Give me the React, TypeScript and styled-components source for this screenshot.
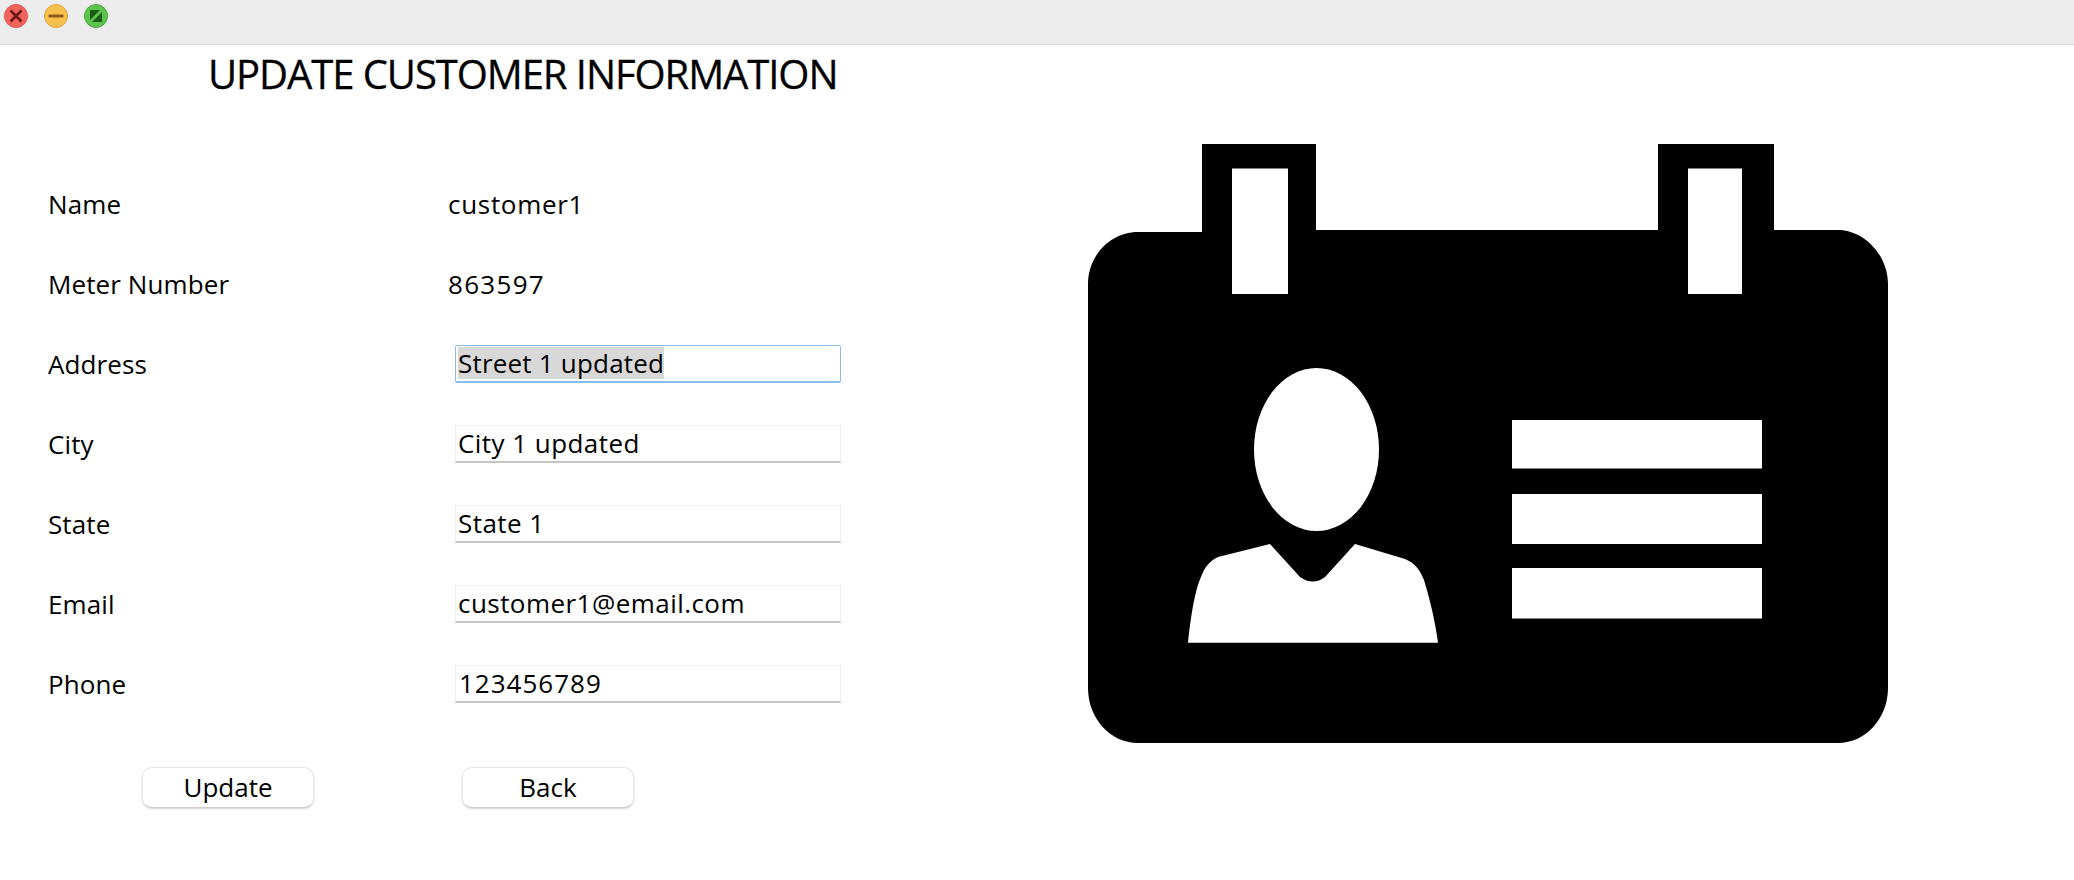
import { createGlobalStyle } from "styled-components";
import styled from "styled-components";

const GlobalStyle = createGlobalStyle`
  html, body {
    margin: 0;
    padding: 0;
    background: #ffffff;
    font-family: "Open Sans", "Liberation Sans", sans-serif;
    color: #000000;
  }
`;

const Page = styled.div`
  width: 2074px;
  height: 880px;
  overflow: hidden;
  background: #ffffff;
`;

const TitleBar = styled.div`
  height: 45px;
  box-sizing: border-box;
  padding: 4px 4px 0;
  display: flex;
  gap: 16px;
  background: #ececed;
  border-bottom: 1px solid #d6d6d6;
`;

const TrafficLight = styled.svg`
  width: 24px;
  height: 24px;
  display: block;
`;

const Content = styled.div`
  display: flex;
  align-items: flex-start;
`;

const FormColumn = styled.div`
  width: 1088px;
  box-sizing: border-box;
  padding-left: 48px;
`;

const Heading = styled.h1`
  margin: 0;
  padding: 4px 0 0 160px;
  height: 119px;
  box-sizing: border-box;
  font-size: 40px;
  line-height: 50px;
  font-weight: 400;
  letter-spacing: -1.07px;
  white-space: nowrap;
  -webkit-text-stroke: 0.3px #000000;
`;

const Row = styled.div`
  display: grid;
  grid-template-columns: 400px 393px;
  align-items: center;
  height: 80px;
  font-size: 26px;
`;

const Label = styled.div`
  line-height: 36px;
  letter-spacing: 0.1px;
`;

const Value = styled.div<{ $spacing: number }>`
  line-height: 36px;
  letter-spacing: ${(p) => p.$spacing}px;
`;

const Field = styled.div<{ $focused?: boolean; $numeric?: boolean }>`
  margin-left: 7px;
  height: 38px;
  box-sizing: border-box;
  padding-left: ${(p) => (p.$numeric ? 3 : 2)}px;
  line-height: 35px;
  letter-spacing: ${(p) => (p.$numeric ? 1 : 0.45)}px;
  background: #ffffff;
  border: 1px solid ${(p) => (p.$focused ? "#8cbcf0" : "#f0f0f0")};
  border-bottom: 2px solid ${(p) => (p.$focused ? "#8cbcf0" : "#c4c4c4")};
  border-radius: ${(p) => (p.$focused ? 2 : 0)}px;
`;

const Selected = styled.span`
  display: inline-block;
  margin-top: 1px;
  line-height: 32px;
  letter-spacing: 0.2px;
  background: #d8d8d8;
`;

const Buttons = styled.div`
  display: flex;
  gap: 148px;
  padding: 43px 0 0 94px;
`;

const Button = styled.button`
  width: 172px;
  height: 41px;
  padding: 0 0 2px;
  font: inherit;
  font-size: 26px;
  line-height: 36px;
  color: #000000;
  background: #ffffff;
  border: 1px solid #e6e6e6;
  border-bottom: 1px solid #cfcfcf;
  border-radius: 10px;
  box-shadow: 0 1px 2px rgba(0, 0, 0, 0.18);
`;

const BadgeIcon = styled.svg`
  display: block;
  margin-top: 99px;
  width: 800px;
  height: 599px;
`;

const IdBadge = () => (
  <BadgeIcon viewBox="1088 144 800 599">
    <path
      fill="#000000"
      d="M1202 144 H1316 V230 H1658 V144 H1774 V230 H1838 C1864 230 1888 255 1888 284 V688 C1888 718 1866 743 1838 743 H1138 C1110 743 1088 718 1088 688 V284 C1088 256 1110 232 1138 232 H1202 Z"
    />
    <g fill="#ffffff">
      <rect x="1232" y="168.5" width="56" height="125.5" />
      <rect x="1688" y="168.5" width="54" height="125.5" />
      <ellipse cx="1316.5" cy="449.5" rx="62.5" ry="81.5" />
      <path d="M1188 642.7 C1191 615 1195 590 1201 577 C1205 566 1210 561 1218 557 L1270 544 L1300 577 Q1313 586 1325 577 L1355 544 L1405 559 C1415 563 1420 570 1424 580 C1430 600 1435 620 1438 642.7 Z" />
      <rect x="1512" y="420" width="250" height="48.5" />
      <rect x="1512" y="494" width="250" height="50" />
      <rect x="1512" y="568" width="250" height="50.5" />
    </g>
  </BadgeIcon>
);

const fields = [
  { label: "City", value: "City 1 updated" },
  { label: "State", value: "State 1" },
  { label: "Email", value: "customer1@email.com" },
  { label: "Phone", value: "123456789", numeric: true },
];

const App = () => {
  return (
    <Page>
      <GlobalStyle />
      <TitleBar>
        <TrafficLight viewBox="0 0 24 24">
          <circle cx="12" cy="12" r="11.5" fill="#f0645c" stroke="#dd5850" />
          <path d="M6.5 6.5 L17.5 17.5 M17.5 6.5 L6.5 17.5" stroke="#6e1410" strokeWidth="2.6" />
        </TrafficLight>
        <TrafficLight viewBox="0 0 24 24">
          <circle cx="12" cy="12" r="11.5" fill="#f6bf50" stroke="#e0a63c" />
          <path d="M4.5 12 H19.5" stroke="#90591a" strokeWidth="3" />
        </TrafficLight>
        <TrafficLight viewBox="0 0 24 24">
          <circle cx="12" cy="12" r="11.5" fill="#5ec24e" stroke="#4ba83e" />
          <path d="M6 6 H16 L6 16 Z M18 8 V18 H8 Z" fill="#1d5c14" />
        </TrafficLight>
      </TitleBar>
      <Content>
        <FormColumn>
          <Heading>UPDATE CUSTOMER INFORMATION</Heading>
          <Row>
            <Label>Name</Label>
            <Value $spacing={0.7}>customer1</Value>
          </Row>
          <Row>
            <Label>Meter Number</Label>
            <Value $spacing={1.3}>863597</Value>
          </Row>
          <Row>
            <Label>Address</Label>
            <Field $focused>
              <Selected>Street 1 updated</Selected>
            </Field>
          </Row>
          {fields.map((field) => (
            <Row key={field.label}>
              <Label>{field.label}</Label>
              <Field $numeric={field.numeric}>{field.value}</Field>
            </Row>
          ))}
          <Buttons>
            <Button>Update</Button>
            <Button>Back</Button>
          </Buttons>
        </FormColumn>
        <IdBadge />
      </Content>
    </Page>
  );
};

export default App;
